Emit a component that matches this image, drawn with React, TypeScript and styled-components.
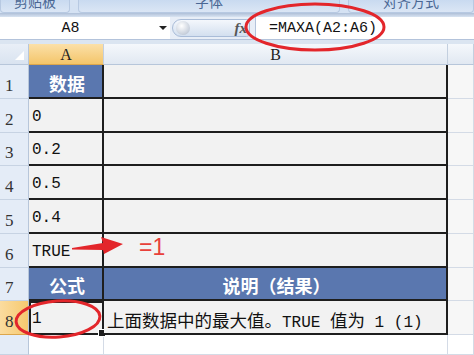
import React from 'react';
import styled, { createGlobalStyle } from 'styled-components';

const GlobalStyle = createGlobalStyle`
  html, body {
    margin: 0;
    padding: 0;
    background: #ffffff;
  }
  * {
    box-sizing: border-box;
  }
`;

const MONO = `"Liberation Mono", "Noto Sans CJK SC", monospace`;
const HAN = `"Noto Sans CJK SC", sans-serif`;
const RED = '#e3262b';
const DARK = '#1e1e1e';
const GRID = '#d4dbe6';

const Page = styled.div`
  position: relative;
  width: 474px;
  height: 355px;
  overflow: hidden;
  background: #dde6f2;
  display: flex;
  flex-direction: column;
`;

/* ribbon group labels, clipped at the top */
const Ribbon = styled.div`
  height: 13px;
  display: flex;
  gap: 8px;
  overflow: hidden;
  background: #d5e2f3;
`;

const Group = styled.div<{ w: string }>`
  flex: ${p => p.w};
  display: flex;
  justify-content: center;
  background: linear-gradient(#c9daf0, #dbe6f5);
  border-radius: 0 0 4px 4px;
  border: 1px solid #b7c9e2;
  border-top: none;
`;

const GroupLabel = styled.span`
  font-family: ${HAN};
  font-size: 14px;
  line-height: 14px;
  margin-top: -6px;
  color: #4a6794;
`;

const Seam = styled.div`
  height: 4px;
  background: linear-gradient(#aebfd8, #d9e4f2);
`;

const FormulaBar = styled.div`
  height: 23px;
  display: flex;
  align-items: stretch;
  background: #e8eef7;
  border-bottom: 1px solid #b3c3db;
`;

const NameBox = styled.div`
  width: 155px;
  display: flex;
  align-items: center;
  justify-content: center;
  background: #ffffff;
  font-family: ${MONO};
  font-size: 15px;
  color: #111;
  padding-right: 14px;
`;

const Drop = styled.div`
  width: 15px;
  display: flex;
  align-items: center;
  justify-content: center;
  background: #ffffff;
  &::after {
    content: '';
    border-left: 4px solid transparent;
    border-right: 4px solid transparent;
    border-top: 4px solid #222;
  }
`;

const Pill = styled.div`
  margin: 2px 0 2px 2px;
  width: 78px;
  border-radius: 11px 4px 4px 11px;
  border: 1px solid #a9bcd8;
  background: linear-gradient(#f4f7fc, #d3dfef);
  display: flex;
  align-items: center;
  justify-content: space-between;
  padding: 0 2px 0 3px;
`;

const Knob = styled.div`
  width: 14px;
  height: 14px;
  border-radius: 50%;
  background: radial-gradient(circle at 40% 35%, #ffffff, #c7cfdb 70%, #9aa5b5);
`;

const Fx = styled.span`
  font-family: "Liberation Serif", serif;
  font-style: italic;
  font-weight: bold;
  font-size: 15px;
  color: #555;
`;

const Input = styled.div`
  flex: 1;
  margin-left: 5px;
  background: #ffffff;
  border-left: 1px solid #b3c3db;
  display: flex;
  align-items: center;
  padding-left: 13px;
  font-family: ${MONO};
  font-size: 15px;
  color: #111;
`;

const Gap = styled.div`
  height: 4px;
  background: #dbe5f1;
`;

const Sheet = styled.div`
  flex: 1;
  display: grid;
  grid-template-columns: 29px 75px 344px 1fr;
  grid-template-rows: 21px repeat(8, 33.75px) 1fr;
  background: #ffffff;
`;

const Corner = styled.div`
  background: linear-gradient(#e9eff7, #d9e3f0);
  border-right: 1px solid #b7c6da;
  border-bottom: 1px solid #b7c6da;
  display: flex;
  align-items: flex-end;
  justify-content: flex-end;
  padding: 0 4px 4px 0;
  &::after {
    content: '';
    border-left: 9px solid transparent;
    border-bottom: 9px solid #ffffff;
  }
`;

const ColHead = styled.div<{ active?: boolean }>`
  background: ${p =>
    p.active ? 'linear-gradient(#fbe0a8, #f4c56a)' : 'linear-gradient(#f5f8fc, #e1e8f2)'};
  border-right: 1px solid #c3cfdf;
  border-bottom: 1px solid ${p => (p.active ? '#dca64c' : '#b7c6da')};
  font-family: "Liberation Serif", serif;
  font-size: 16px;
  color: #222;
  display: flex;
  align-items: flex-end;
  justify-content: center;
  line-height: 18px;
`;

const RowHead = styled.div<{ active?: boolean }>`
  background: ${p => (p.active ? 'linear-gradient(90deg, #fbdc9f, #f6c96f)' : '#e4ecf7')};
  border-right: 1px solid #b7c6da;
  border-bottom: 1px solid ${p => (p.active ? '#dca64c' : '#c7d3e3')};
  font-family: "Liberation Serif", serif;
  font-size: 17px;
  color: #333;
  display: flex;
  align-items: flex-end;
  padding: 0 0 2px 5px;
`;

const Cell = styled.div<{ head?: boolean; center?: boolean }>`
  position: relative;
  background: ${p => (p.head ? '#5a77af' : '#f2f2f2')};
  border-right: 2px solid ${DARK};
  border-bottom: 2px solid ${DARK};
  color: ${p => (p.head ? '#ffffff' : '#111111')};
  font-family: ${MONO};
  font-size: 16px;
  display: flex;
  align-items: center;
  justify-content: ${p => (p.center ? 'center' : 'flex-start')};
  padding: 4px 0 0 3px;
  white-space: pre;
`;

const Han = styled.span<{ bold?: boolean }>`
  font-family: ${HAN};
  font-size: ${p => (p.bold ? '18px' : '17.5px')};
  font-weight: ${p => (p.bold ? 700 : 400)};
`;

const Selected = styled(Cell)`
  outline: 2px solid ${DARK};
  outline-offset: -2px;
  &::after {
    content: '';
    position: absolute;
    right: -4px;
    bottom: -4px;
    width: 6px;
    height: 6px;
    background: ${DARK};
    border: 1px solid #ffffff;
  }
`;

const Blank = styled.div<{ tint?: boolean }>`
  background: ${p => (p.tint ? '#f7f7f7' : '#ffffff')};
  border-right: 1px solid ${GRID};
  border-bottom: 1px solid ${GRID};
`;

const Overlay = styled.svg`
  position: absolute;
  inset: 0;
  pointer-events: none;
`;

const Result = styled.span`
  position: absolute;
  left: 139px;
  top: 234px;
  font-family: "Liberation Sans", sans-serif;
  font-size: 23px;
  color: #e8403a;
`;

const data = ['0', '0.2', '0.5', '0.4', 'TRUE'];

export default function App() {
  return (
    <Page>
      <GlobalStyle />
      <Ribbon>
        <Group w="0 0 70px">
          <GroupLabel>剪贴板</GroupLabel>
        </Group>
        <Group w="0 0 262px">
          <GroupLabel>字体</GroupLabel>
        </Group>
        <Group w="1">
          <GroupLabel>对齐方式</GroupLabel>
        </Group>
      </Ribbon>
      <Seam />
      <FormulaBar>
        <NameBox>A8</NameBox>
        <Drop />
        <Pill>
          <Knob />
          <Fx>fx</Fx>
        </Pill>
        <Input>=MAXA(A2:A6)</Input>
      </FormulaBar>
      <Gap />
      <Sheet>
        <Corner />
        <ColHead active>A</ColHead>
        <ColHead>B</ColHead>
        <ColHead />

        <RowHead>1</RowHead>
        <Cell head center>
          <Han bold>数据</Han>
        </Cell>
        <Cell />
        <Blank tint />

        {data.map((v, i) => (
          <React.Fragment key={v}>
            <RowHead>{i + 2}</RowHead>
            <Cell>{v}</Cell>
            <Cell />
            <Blank tint />
          </React.Fragment>
        ))}

        <RowHead>7</RowHead>
        <Cell head center>
          <Han bold>公式</Han>
        </Cell>
        <Cell head center>
          <Han bold>说明（结果）</Han>
        </Cell>
        <Blank tint />

        <RowHead active>8</RowHead>
        <Selected>1</Selected>
        <Cell>
          <span>
            <Han>上面数据中的最大值。</Han>
            {'TRUE '}
            <Han>值为</Han>
            {' 1 (1)'}
          </span>
        </Cell>
        <Blank tint />

        <RowHead />
        <Blank />
        <Blank />
        <Blank />
      </Sheet>

      <Overlay width="474" height="355" viewBox="0 0 474 355">
        <ellipse cx="315" cy="27" rx="69" ry="23" fill="none" stroke={RED} strokeWidth="3" />
        <ellipse
          cx="58"
          cy="319"
          rx="42"
          ry="18"
          fill="none"
          stroke={RED}
          strokeWidth="3"
          transform="rotate(-4 58 319)"
        />
        <polygon
          points="72,248 103,243 101,237 123,244 104,254 103,250 72,249.5"
          fill={RED}
        />
      </Overlay>
      <Result>=1</Result>
    </Page>
  );
}
